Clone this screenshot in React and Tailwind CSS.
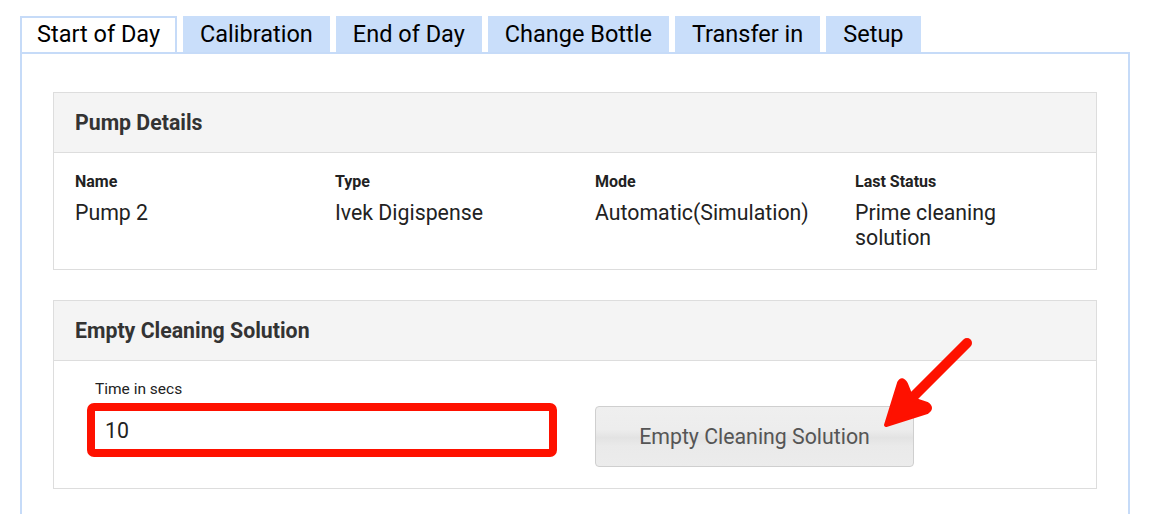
import React from 'react';

const TABS = ['Start of Day', 'Calibration', 'End of Day', 'Change Bottle', 'Transfer in', 'Setup'];

const DETAILS = [
  { label: 'Name', value: 'Pump 2' },
  { label: 'Type', value: 'Ivek Digispense' },
  { label: 'Mode', value: 'Automatic(Simulation)' },
  { label: 'Last Status', value: 'Prime cleaning solution' },
];

// red pointer drawn over the page, in page coordinates
function Arrow() {
  return (
    <svg className="absolute inset-0 pointer-events-none" width="1150" height="514" viewBox="0 0 1150 514">
      <line x1="967" y1="343" x2="906" y2="404" stroke="#fe1100" strokeWidth="10" strokeLinecap="round" />
      <path
        d="M886 425 L899 383 Q902 377 906 384 L912 399 L927 404 Q933 408 927 412 Z"
        fill="#fe1100"
        stroke="#fe1100"
        strokeWidth="4"
        strokeLinejoin="round"
      />
    </svg>
  );
}

function Card({ title, children }) {
  return (
    <div className="border border-[#dddddd] bg-white">
      <div className="h-[60px] px-[21px] flex items-center bg-[#f4f4f4] border-b border-[#dddddd] text-[21.3px] font-bold text-[#333]">
        {title}
      </div>
      {children}
    </div>
  );
}

export default function App() {
  return (
    <div className="relative w-[1150px] h-[514px] overflow-hidden bg-white font-['Roboto',sans-serif] text-[#222]">
      <div className="pt-[16px] pl-[20px] pr-[20px]">
        <div className="flex items-end gap-[6px] h-[36px]">
          {TABS.map((t, i) => (
            <div
              key={t}
              className={
                i === 0
                  ? 'h-[36px] px-[15px] pb-[1px] flex items-center bg-white border-2 border-b-0 border-[#c6dbf8] text-[23.5px] text-black'
                  : 'h-[36px] px-[17px] pt-[1px] flex items-center bg-[#c9defa] text-[23.5px] text-black'
              }
            >
              {t}
            </div>
          ))}
        </div>

        <div className="border-2 border-[#c6dbf8] px-[31px] pt-[38px] pb-[40px] flex flex-col gap-[30px]">
          <Card title="Pump Details">
            <div className="px-[21px] pt-[19px] pb-[19px] grid grid-cols-[260px_260px_260px_1fr]">
              {DETAILS.map((d) => (
                <div key={d.label}>
                  <div className="text-[16px] leading-[19px] font-bold text-[#222]">{d.label}</div>
                  <div className={`mt-[9px] text-[21.3px] leading-[25px] text-[#222] ${d.label === 'Last Status' ? 'max-w-[200px]' : ''}`}>
                    {d.value}
                  </div>
                </div>
              ))}
            </div>
          </Card>

          <Card title="Empty Cleaning Solution">
            <div className="px-[21px] pt-[19px] pb-[21px] flex items-start">
              <div className="w-[494px] px-[20px]">
                <div className="text-[15.5px] leading-[19px] text-[#222]">Time in secs</div>
                <div className="relative mt-[12px]">
                  <input
                    readOnly
                    value="10"
                    className="w-full h-[38px] px-[10px] text-[21.3px] text-[#222] bg-white outline-none"
                  />
                  <div className="absolute -inset-[8px] border-[8px] border-[#fe1100] rounded-[7px] pointer-events-none" />
                </div>
              </div>
              <button className="ml-[26px] mt-[26px] w-[319px] h-[61px] rounded-[4px] border border-[#cfcfcf] bg-[linear-gradient(#efefef,#ededed_38%,#e3e3e3_52%,#eaeaea_66%,#ececec)] text-[21.3px] text-[#555]">
                Empty Cleaning Solution
              </button>
            </div>
          </Card>
        </div>
      </div>
      <Arrow />
    </div>
  );
}
